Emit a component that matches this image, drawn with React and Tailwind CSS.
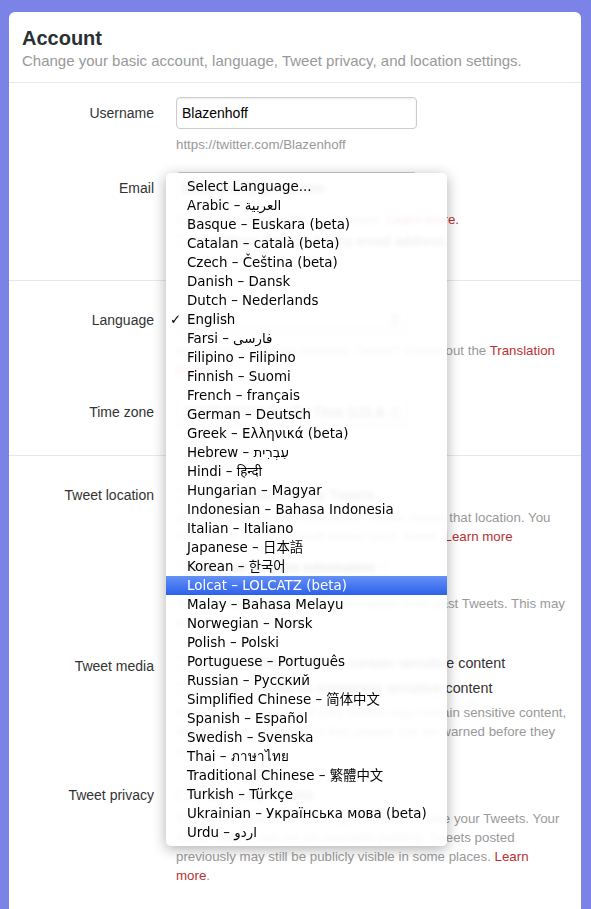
import React from 'react';

const languages = [
  'Select Language...',
  'Arabic – العربية',
  'Basque – Euskara (beta)',
  'Catalan – català (beta)',
  'Czech – Čeština (beta)',
  'Danish – Dansk',
  'Dutch – Nederlands',
  'English',
  'Farsi – فارسی',
  'Filipino – Filipino',
  'Finnish – Suomi',
  'French – français',
  'German – Deutsch',
  'Greek – Ελληνικά (beta)',
  'Hebrew – עִבְרִית',
  'Hindi – हिन्दी',
  'Hungarian – Magyar',
  'Indonesian – Bahasa Indonesia',
  'Italian – Italiano',
  'Japanese – 日本語',
  'Korean – 한국어',
  'Lolcat – LOLCATZ (beta)',
  'Malay – Bahasa Melayu',
  'Norwegian – Norsk',
  'Polish – Polski',
  'Portuguese – Português',
  'Russian – Русский',
  'Simplified Chinese – 简体中文',
  'Spanish – Español',
  'Swedish – Svenska',
  'Thai – ภาษาไทย',
  'Traditional Chinese – 繁體中文',
  'Turkish – Türkçe',
  'Ukrainian – Українська мова (beta)',
  'Urdu – اردو',
];

const Label = ({ children, className = '' }) => (
  <div className={`w-[145px] shrink-0 text-right text-[14px] text-[#333] ${className}`}>{children}</div>
);

const Checkbox = ({ children }) => (
  <label className="flex items-center gap-[7px] text-[14.3px] leading-5 text-[#333]">
    <span className="h-[13px] w-[13px] rounded-[3px] border border-[#999] bg-white shadow-[inset_0_1px_1px_rgba(0,0,0,0.1)]" />
    {children}
  </label>
);

const Hint = ({ children, className = '' }) => (
  <p className={`text-[13.3px] leading-[19px] text-[#999] ${className}`}>{children}</p>
);

const Link = ({ children }) => <span className="text-[#b8312f]">{children}</span>;

const SelectBox = ({ children }) => (
  <div className="flex h-8 w-[232px] items-center rounded-[4px] border border-[#ccc] bg-gradient-to-b from-white to-[#f2f2f2] pl-2 pr-2 text-[14px] text-[#333]">
    <span className="flex-1 overflow-hidden whitespace-nowrap">{children}</span>
    <svg width="8" height="12" viewBox="0 0 8 12" className="ml-1 shrink-0">
      <path d="M1 4.5 L4 1.5 L7 4.5" fill="none" stroke="#555" strokeWidth="1.3" />
      <path d="M1 7.5 L4 10.5 L7 7.5" fill="none" stroke="#555" strokeWidth="1.3" />
    </svg>
  </div>
);

export default function App() {
  return (
    <div
      className="relative min-h-screen bg-[#7b84e6] pl-[9px] pr-[10px] pt-3"
      style={{ fontFamily: '"Liberation Sans", Arial, sans-serif' }}
    >
      <div className="overflow-hidden rounded-[6px] bg-white pb-16">
        {/* Header */}
        <div className="border-b border-[#e8e8e8] px-[13px] pt-[14px] pb-[12px]">
          <h1 className="text-[20px] font-bold leading-6 text-[#292f33]">Account</h1>
          <p className="mt-[2px] text-[15px] leading-[18px] text-[#999]">
            Change your basic account, language, Tweet privacy, and location settings.
          </p>
        </div>

        {/* Username / email */}
        <div className="border-b border-[#e8e8e8] pt-[14px] pb-[29px]">
          <div className="flex gap-[22px]">
            <Label className="leading-8">Username</Label>
            <div>
              <div className="flex h-8 w-[241px] items-center rounded-[4px] border border-[#ccc] px-[5px] text-[14px] text-black shadow-[inset_0_1px_2px_rgba(0,0,0,0.08)]">
                Blazenhoff
              </div>
              <Hint className="mt-[6px]">https://twitter.com/Blazenhoff</Hint>
            </div>
          </div>
          <div className="mt-[18px] flex gap-[22px]">
            <Label className="leading-8">Email</Label>
            <div>
              <div className="flex h-8 w-[241px] items-center rounded-[4px] border border-[#ccc] px-[5px] text-[14px] text-black shadow-[inset_0_1px_2px_rgba(0,0,0,0.08)]">
                blazenhoff@gmail.com
              </div>
              <Hint className="mt-[6px]">
                Email will not be publicly displayed. <Link>Learn more.</Link>
              </Hint>
              <div className="mt-[2px]">
                <Checkbox>Let others find me by my email address</Checkbox>
              </div>
            </div>
          </div>
        </div>

        {/* Language / time zone */}
        <div className="border-b border-[#e8e8e8] pt-[22px] pb-[27px]">
          <div className="flex gap-[22px]">
            <Label className="pt-[1px] leading-8">Language</Label>
            <div className="w-[392px]">
              <SelectBox>English</SelectBox>
              <Hint className="mt-[6px]">
                Interested in helping translate Twitter? Check out the <Link>Translation Center</Link>.
              </Hint>
            </div>
          </div>
          <div className="mt-[17px] flex gap-[22px]">
            <Label className="leading-8">Time zone</Label>
            <SelectBox>(GMT-08:00) Pacific Time (US &amp; Canada)</SelectBox>
          </div>
        </div>

        {/* Tweet settings */}
        <div className="pt-[29px]">
          <div className="flex gap-[22px]">
            <Label className="leading-5">Tweet location</Label>
            <div className="w-[392px]">
              <Checkbox>Add a location to my Tweets</Checkbox>
              <Hint className="mt-[3px]">
                When you tweet with a location, Twitter stores that location. You can switch location on/off
                before each Tweet. <Link>Learn more</Link>
              </Hint>
              <button className="mt-[7px] h-[30px] rounded-[4px] border border-[#ccc] bg-gradient-to-b from-white to-[#e6e6e6] px-3 text-[13px] font-bold text-[#333]">
                Delete all location information
              </button>
              <Hint className="mt-[11px]">
                This will delete all location information from past Tweets. This may take up to 30 minutes.
              </Hint>
            </div>
          </div>

          <div className="mt-[21px] flex gap-[22px]">
            <Label className="pt-[3px] leading-5">Tweet media</Label>
            <div className="w-[392px]">
              <Checkbox>Display media that may contain sensitive content</Checkbox>
              <div className="mt-[5px]">
                <Checkbox>Mark my media as containing sensitive content</Checkbox>
              </div>
              <Hint className="mt-[5px]">
                Please check this box if your media may contain sensitive content, like nudity or violence, so
                that people can be warned before they see it.
              </Hint>
            </div>
          </div>

          <div className="mt-[25px] flex gap-[22px]">
            <Label className="leading-5">Tweet privacy</Label>
            <div className="w-[386px]">
              <Checkbox>Protect my Tweets</Checkbox>
              <Hint className="mt-[4px]">
                If selected, only those you approve will receive your Tweets. Your future Tweets will not be
                available publicly. Tweets posted previously may still be publicly visible in some places.{' '}
                <Link>Learn more</Link>.
              </Hint>
            </div>
          </div>
        </div>
      </div>

      {/* Open language menu */}
      <ul
        className="absolute left-[166px] top-[173px] w-[281px] rounded-[5px] bg-white/[0.91] py-[4px] text-[13.4px] text-black shadow-[0_3px_14px_rgba(0,0,0,0.32)] backdrop-blur-[2px]"
        style={{ fontFamily: '"DejaVu Sans", "Noto Sans", "Noto Sans CJK SC", sans-serif' }}
      >
        {languages.map((lang) => {
          const active = lang.startsWith('Lolcat');
          return (
            <li
              key={lang}
              className={`relative h-[19px] whitespace-nowrap pl-[21px] leading-[19px] ${
                active ? 'bg-gradient-to-b from-[#6590f6] to-[#2d60ea] text-white' : ''
              }`}
            >
              {lang === 'English' && <span className="absolute left-[4px] top-0">✓</span>}
              {lang}
            </li>
          );
        })}
      </ul>
    </div>
  );
}
